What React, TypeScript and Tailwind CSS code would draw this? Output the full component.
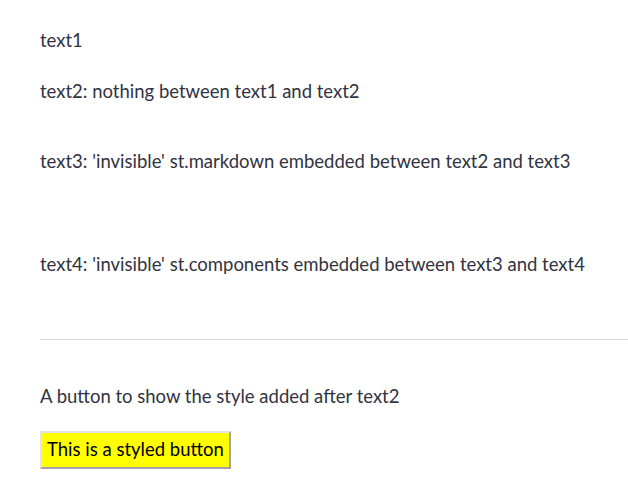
export default function App() {
  return (
    <div className="min-h-screen bg-white pl-[40px] text-[#31333f] font-['Lato','Liberation_Sans',sans-serif] text-[18.5px]">
      <p className="pt-[27px] leading-[26px]">text1</p>
      <p className="mt-[25px] leading-[26px]">text2: nothing between text1 and text2</p>
      <p className="mt-[44px] leading-[26px]">text3: 'invisible' st.markdown embedded between text2 and text3</p>
      <p className="mt-[77px] leading-[26px]">text4: 'invisible' st.components embedded between text3 and text4</p>
      <hr className="mt-[62px] border-0 border-t border-[#d6d6d9]" />
      <p className="mt-[43px] leading-[26px]">A button to show the style added after text2</p>
      <button className="mt-[22px] h-[38px] px-[5px] bg-[#ffff00] text-black border-2 border-t-[#e3e3e3] border-l-[#e3e3e3] border-b-[#a3a3a8] border-r-[#a3a3a8]">
        This is a styled button
      </button>
    </div>
  );
}
